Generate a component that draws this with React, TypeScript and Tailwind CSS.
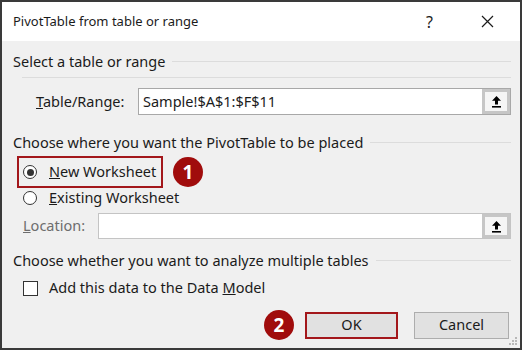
import React from "react";

const font = { fontFamily: "'Segoe UI', 'Noto Sans', sans-serif" };

// Small "collapse dialog" button at the end of a range box.
function RangeButton() {
  return (
    <div className="flex h-full w-[28px] shrink-0 bg-[#c6c6c6] p-[3px]">
      <div className="flex h-full w-full items-center justify-center bg-[#f5f5f5]">
        <svg width="11" height="13" viewBox="0 0 11 13" aria-hidden="true">
          <path d="M5.5 1 L10 5.8 H7 V9.5 H4 V5.8 H1 Z" fill="#000" />
          <rect x="1" y="11" width="9" height="1.6" fill="#000" />
        </svg>
      </div>
    </div>
  );
}

function Heading({ text }: { text: string }) {
  return (
    <div className="flex h-[20px] items-center">
      <span className="leading-[20px] whitespace-nowrap">{text}</span>
      <div className="ml-[7px] h-px flex-1 bg-[#dcdcdc]" />
    </div>
  );
}

function Badge({ n }: { n: string }) {
  return (
    <div className="flex h-[30px] w-[30px] shrink-0 items-center justify-center rounded-full bg-[#a00c0c] text-[19px] leading-none font-bold text-white">
      {n}
    </div>
  );
}

function Radio({ checked }: { checked?: boolean }) {
  return (
    <div className="flex h-[14px] w-[14px] shrink-0 items-center justify-center rounded-full border border-[#333] bg-white">
      {checked && <div className="h-[7px] w-[7px] rounded-full bg-[#333]" />}
    </div>
  );
}

export default function App() {
  return (
    <div
      className="relative flex h-[350px] w-[522px] flex-col overflow-hidden border-2 border-[#3a3a3a] bg-[#f0f0f0] text-[14.5px] text-[#1b1b1b]"
      style={font}
    >
      {/* title bar */}
      <div className="flex h-[39px] shrink-0 items-center bg-white pl-[11px]">
        <span className="text-[13px]">PivotTable from table or range</span>
        <span className="ml-auto text-[16px]">?</span>
        <svg className="mr-[26px] ml-[48px]" width="13" height="13" viewBox="0 0 13 13" aria-hidden="true">
          <path d="M1 1 L12 12 M12 1 L1 12" stroke="#1b1b1b" strokeWidth="1.2" />
        </svg>
      </div>

      <div className="flex flex-1 flex-col pr-[9px] pl-[11px]">
        <div className="mt-[10px]">
          <Heading text="Select a table or range" />
        </div>
        <div className="mt-[6px] ml-[9px] h-px bg-[#dcdcdc]" />

        <div className="mt-[10px] flex h-[27px] items-center">
          <span className="ml-[23px] w-[102px] shrink-0">
            <u>T</u>able/Range:
          </span>
          <div className="flex h-full flex-1 border border-[#a8a8a8] bg-white">
            <span className="flex-1 pl-[4px] leading-[25px]">Sample!$A$1:$F$11</span>
            <RangeButton />
          </div>
        </div>

        <div className="mt-[17px]">
          <Heading text="Choose where you want the PivotTable to be placed" />
        </div>

        <div className="mt-[4px] flex items-center">
          <div className="ml-[4px] flex h-[32px] w-[146px] items-center border-2 border-[#a3171b] pl-[4px]">
            <Radio checked />
            <span className="ml-[12px] whitespace-nowrap">
              <u>N</u>ew Worksheet
            </span>
          </div>
          <div className="ml-[10px]">
            <Badge n="1" />
          </div>
        </div>

        <div className="flex h-[20px] items-center pl-[10px]">
          <Radio />
          <span className="ml-[12px]">
            <u>E</u>xisting Worksheet
          </span>
        </div>

        <div className="mt-[5px] flex h-[26px] items-center">
          <span className="ml-[10px] w-[75px] shrink-0 text-[#6d6d6d]">
            <u>L</u>ocation:
          </span>
          <div className="flex h-full flex-1 border border-[#c4c4c4] bg-white">
            <span className="flex-1" />
            <RangeButton />
          </div>
        </div>

        <div className="mt-[11px]">
          <Heading text="Choose whether you want to analyze multiple tables" />
        </div>

        <div className="mt-[8px] flex h-[20px] items-center pl-[10px]">
          <div className="h-[15px] w-[15px] shrink-0 border border-[#333] bg-white" />
          <span className="ml-[11px]">
            Add this data to the Data <u>M</u>odel
          </span>
        </div>

        <div className="mt-[12px] mr-[2px] flex items-center justify-end">
          <Badge n="2" />
          <button className="ml-[11px] h-[27px] w-[93px] border-2 border-[#a3171b] bg-[#e1e1e1] text-[14.5px]">
            OK
          </button>
          <button className="ml-[16px] h-[27px] w-[95px] border border-[#adadad] bg-[#e1e1e1] text-[14.5px]">
            Cancel
          </button>
        </div>
      </div>

      {/* resize grip */}
      <svg className="absolute right-[2px] bottom-[2px]" width="9" height="9" viewBox="0 0 9 9" aria-hidden="true">
        <g fill="#b8b8b8">
          <rect x="6" y="0" width="2" height="2" />
          <rect x="3" y="3" width="2" height="2" />
          <rect x="6" y="3" width="2" height="2" />
          <rect x="0" y="6" width="2" height="2" />
          <rect x="3" y="6" width="2" height="2" />
          <rect x="6" y="6" width="2" height="2" />
        </g>
      </svg>
    </div>
  );
}
